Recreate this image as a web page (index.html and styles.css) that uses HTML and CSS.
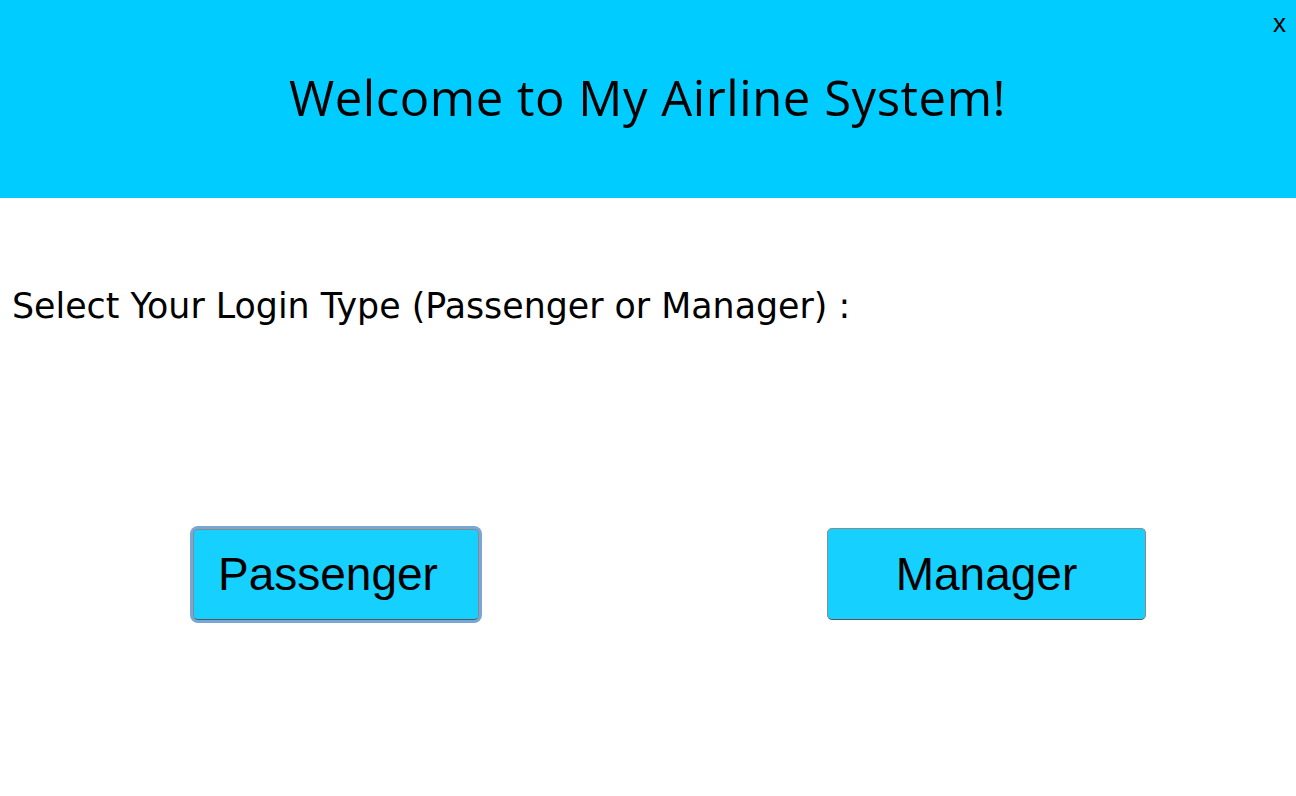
FILE: index.html
```html
<!DOCTYPE html>
<html>
<head>
<meta charset="utf-8">
<link rel="stylesheet" href="styles.css">
</head>
<body>
<div class="app">
  <header class="header">
    <h1 class="title">Welcome to My Airline System!</h1>
    <span class="close">x</span>
  </header>
  <main class="content">
    <p class="prompt">Select Your Login Type (Passenger or Manager) :</p>
    <div class="buttons">
      <button class="btn btn-passenger">Passenger</button>
      <button class="btn btn-manager">Manager</button>
    </div>
  </main>
</div>
</body>
</html>
```
FILE: styles.css
```css
html, body {
  margin: 0;
  padding: 0;
  background: #ffffff;
}
.app {
  width: 1296px;
  height: 796px;
  display: flex;
  flex-direction: column;
  font-family: "Open Sans", "DejaVu Sans", sans-serif;
  color: #000;
}
.header {
  position: relative;
  height: 198px;
  background: #00ccff;
  display: flex;
  align-items: center;
  justify-content: center;
}
.title {
  margin: 0;
  font-weight: 500;
  font-size: 49px;
  line-height: 1.2;
  letter-spacing: 0.55px;
  padding: 0 1px 4px 0;
}
.close {
  position: absolute;
  top: 8px;
  right: 10px;
  font-family: "Liberation Sans", Arial, sans-serif;
  font-size: 26px;
}
.content {
  flex: 1;
  display: flex;
  flex-direction: column;
}
.prompt {
  margin: 87px 0 0 12px;
  font-family: "DejaVu Sans", sans-serif;
  font-size: 34.8px;
  line-height: 42px;
}
.buttons {
  display: flex;
  align-items: center;
  margin-top: 201px;
  padding-left: 193px;
  gap: 348px;
}
.btn {
  font-family: "Liberation Sans", Arial, sans-serif;
  font-size: 46px;
  color: #000;
  background: #16d0ff;
  border: 1px solid #8a8a8a;
  border-bottom-color: #555;
  border-radius: 5px;
  height: 91px;
  padding: 0;
  box-sizing: border-box;
}
.btn-passenger {
  width: 286px;
  text-align: left;
  padding-left: 24px;
  box-shadow: 0 0 0 3px #7aa6d6;
}
.btn-manager {
  width: 319px;
  height: 92px;
  text-align: center;
}
```
